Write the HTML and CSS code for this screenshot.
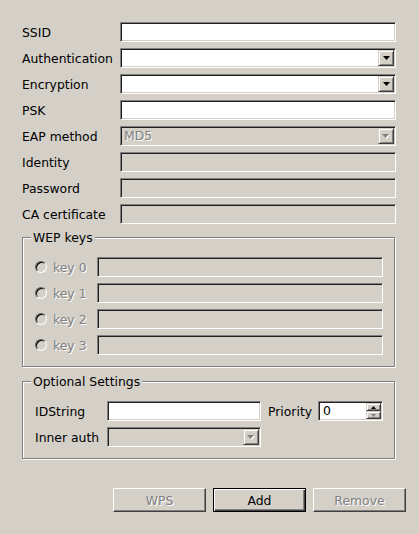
FILE: index.html
```html
<!DOCTYPE html>
<html>
<head>
<meta charset="utf-8">
<title>NetworkConfig</title>
<link rel="stylesheet" href="styles.css">
</head>
<body>
<div class="dialog">
  <div class="form">
    <span class="lbl">SSID</span>
    <div class="sunken"><span class="field-text"></span></div>
    <span class="lbl">Authentication</span>
    <div class="sunken"><span class="field-text"></span><span class="drop"><svg width="7" height="4" viewBox="0 0 7 4"><polygon points="0,0 7,0 3.5,4" fill="#000"/></svg></span></div>
    <span class="lbl">Encryption</span>
    <div class="sunken"><span class="field-text"></span><span class="drop"><svg width="7" height="4" viewBox="0 0 7 4"><polygon points="0,0 7,0 3.5,4" fill="#000"/></svg></span></div>
    <span class="lbl">PSK</span>
    <div class="sunken"><span class="field-text"></span></div>
    <span class="lbl">EAP method</span>
    <div class="sunken off"><span class="field-text dis">MD5</span><span class="drop"><svg width="8" height="5" viewBox="0 0 8 5"><polygon points="1,1 8,1 4.5,5" fill="#fff"/><polygon points="0,0 7,0 3.5,4" fill="#808080"/></svg></span></div>
    <span class="lbl">Identity</span>
    <div class="sunken off"><span class="field-text"></span></div>
    <span class="lbl">Password</span>
    <div class="sunken off"><span class="field-text"></span></div>
    <span class="lbl">CA certificate</span>
    <div class="sunken off"><span class="field-text"></span></div>
  </div>

  <div class="group wep">
    <span class="group-title">WEP keys</span>
    <div class="wep-rows">
      <span class="radio-lbl"><span class="radio"></span><span class="dis">key 0</span></span>
      <div class="sunken off"><span class="field-text"></span></div>
      <span class="radio-lbl"><span class="radio"></span><span class="dis">key 1</span></span>
      <div class="sunken off"><span class="field-text"></span></div>
      <span class="radio-lbl"><span class="radio"></span><span class="dis">key 2</span></span>
      <div class="sunken off"><span class="field-text"></span></div>
      <span class="radio-lbl"><span class="radio"></span><span class="dis">key 3</span></span>
      <div class="sunken off"><span class="field-text"></span></div>
    </div>
  </div>

  <div class="group opt">
    <span class="group-title">Optional Settings</span>
    <div class="opt-grid">
      <span class="lbl">IDString</span>
      <div class="sunken"><span class="field-text"></span></div>
      <span class="lbl prio">Priority</span>
      <div class="sunken spin"><span class="field-text">0</span>
        <span class="spin-btns">
          <span class="spin-btn"><svg width="5" height="3" viewBox="0 0 5 3"><polygon points="2.5,0 5,3 0,3" fill="#000"/></svg></span>
          <span class="spin-btn"><svg width="5" height="3" viewBox="0 0 5 3"><polygon points="0,0 5,0 2.5,3" fill="#808080"/></svg></span>
        </span>
      </div>
      <span class="lbl">Inner auth</span>
      <div class="sunken off"><span class="field-text"></span><span class="drop"><svg width="8" height="5" viewBox="0 0 8 5"><polygon points="1,1 8,1 4.5,5" fill="#fff"/><polygon points="0,0 7,0 3.5,4" fill="#808080"/></svg></span></div>
    </div>
  </div>

  <div class="buttons">
    <span class="btn"><span class="dis">WPS</span></span>
    <span class="btn default">Add</span>
    <span class="btn"><span class="dis">Remove</span></span>
  </div>
</div>
</body>
</html>
```
FILE: styles.css
```css
* { box-sizing: border-box; }
html, body { margin: 0; }
body {
  background: #d4d0c8;
  font-family: "DejaVu Sans", sans-serif;
  font-size: 12.4px;
  color: #000;
  width: 419px;
  height: 534px;
  overflow: hidden;
}
.dialog { padding: 22px 0 0 22px; }

.form {
  display: grid;
  grid-template-columns: 98px 276px;
  grid-auto-rows: 20px;
  row-gap: 6px;
  align-items: center;
}
.lbl { white-space: nowrap; }

.sunken {
  height: 20px;
  border: 1px solid;
  border-color: #808080 #ffffff #ffffff #808080;
  box-shadow: inset 1px 1px 0 #202020, inset -1px -1px 0 #d4d0c8;
  background: #fff;
  padding: 1px;
  display: flex;
  align-items: stretch;
}
.sunken.off { background: #d4d0c8; }
.field-text {
  flex: 1;
  padding-left: 2px;
  line-height: 16px;
  white-space: nowrap;
  overflow: hidden;
}
.dis { color: #808080; text-shadow: 1px 1px 0 #fff; }

.drop {
  width: 16px;
  flex: none;
  border: 1px solid;
  border-color: #d4d0c8 #404040 #404040 #d4d0c8;
  box-shadow: inset 1px 1px 0 #fff, inset -1px -1px 0 #808080;
  background: #d4d0c8;
  display: flex;
  align-items: center;
  justify-content: center;
}
.drop svg { display: block; }

.group {
  position: relative;
  width: 373px;
  border: 1px solid #808080;
  box-shadow: 1px 1px 0 #fff, inset 1px 1px 0 #fff;
  padding: 19px 11px 11px 12px;
}
.wep { margin-top: 13px; }
.opt { margin-top: 14px; }
.group-title {
  position: absolute;
  left: 8px;
  top: -8px;
  line-height: 15px;
  padding: 0 2px;
  background: #d4d0c8;
  white-space: nowrap;
}

.wep-rows {
  display: grid;
  grid-template-columns: 62px 286px;
  grid-auto-rows: 20px;
  row-gap: 6px;
  align-items: center;
}
.radio-lbl { display: flex; align-items: center; gap: 6px; }
.radio {
  width: 12px;
  height: 12px;
  flex: none;
  border-radius: 50%;
  border: 1px solid;
  border-color: #606060 #ffffff #ffffff #606060;
  box-shadow: inset 1px 1px 0 #000, inset -1px -1px 0 #d4d0c8;
  background: #d4d0c8;
}

.opt-grid {
  display: grid;
  grid-template-columns: 72px 154px 1fr 65px;
  grid-auto-rows: 20px;
  row-gap: 6px;
  align-items: center;
}
.prio { padding-left: 7px; }

.spin .field-text { padding-left: 3px; }
.spin-btns {
  width: 15px;
  flex: none;
  display: flex;
  flex-direction: column;
}
.spin-btn {
  flex: 1;
  border: 1px solid;
  border-color: #d4d0c8 #404040 #404040 #d4d0c8;
  box-shadow: inset 1px 1px 0 #fff, inset -1px -1px 0 #808080;
  background: #d4d0c8;
  display: flex;
  align-items: center;
  justify-content: center;
}
.spin-btn svg { display: block; }

.buttons {
  display: flex;
  gap: 7px;
  margin: 29px 0 0 91px;
}
.btn {
  width: 93px;
  height: 24px;
  display: flex;
  align-items: center;
  justify-content: center;
  border: 1px solid;
  border-color: #ffffff #404040 #404040 #ffffff;
  box-shadow: inset -1px -1px 0 #808080, inset 1px 1px 0 #d4d0c8;
  background: #d4d0c8;
}
.btn.default {
  border-color: #000;
  box-shadow: inset 1px 1px 0 #fff, inset -1px -1px 0 #404040, inset -2px -2px 0 #808080;
}
```
